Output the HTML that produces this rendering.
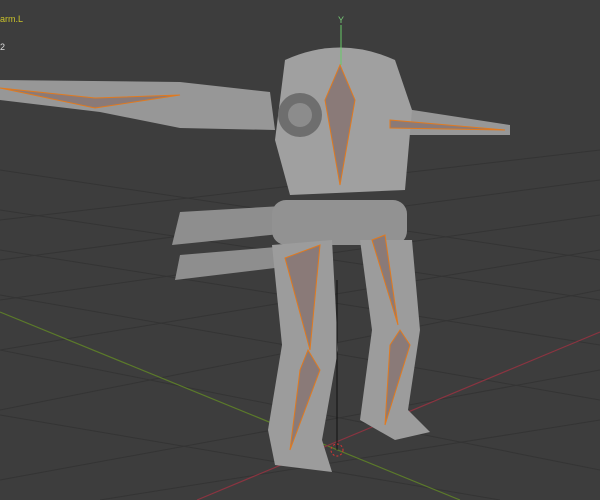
<!DOCTYPE html>
<html><head><style>
html,body{margin:0;padding:0;background:#3d3d3d;width:600px;height:500px;overflow:hidden}
.t{position:absolute;font:9px "Liberation Sans",sans-serif}
</style></head><body>
<svg width="600" height="500" style="position:absolute;left:0;top:0">
<g stroke="#343434" stroke-width="1">
<line x1="0" y1="170" x2="600" y2="260"/><line x1="0" y1="210" x2="600" y2="300"/>
<line x1="0" y1="250" x2="600" y2="345"/><line x1="0" y1="295" x2="600" y2="400"/>
<line x1="0" y1="350" x2="600" y2="470"/><line x1="0" y1="415" x2="500" y2="500"/>
<line x1="0" y1="260" x2="600" y2="180"/><line x1="0" y1="300" x2="600" y2="215"/>
<line x1="0" y1="350" x2="600" y2="250"/><line x1="0" y1="410" x2="600" y2="290"/>
<line x1="0" y1="480" x2="600" y2="370"/><line x1="100" y1="500" x2="600" y2="420"/>
<line x1="0" y1="220" x2="600" y2="150"/>
</g>
<line x1="0" y1="312" x2="460" y2="500" stroke="#5b7a2a" stroke-width="1.2"/>
<line x1="197" y1="500" x2="600" y2="332" stroke="#8a3440" stroke-width="1.2"/>
<!-- arms -->
<path d="M0 80 L180 82 L270 92 L275 130 L180 128 L100 112 L0 100Z" fill="#979797"/>
<path d="M380 105 L510 125 L510 135 L380 135Z" fill="#979797"/>
<!-- torso -->
<path d="M285 60 Q340 35 395 60 L412 110 L405 190 L290 195 L275 140Z" fill="#a0a0a0"/>
<circle cx="300" cy="115" r="22" fill="#6e6e6e"/><circle cx="300" cy="115" r="12" fill="#8c8c8c"/>
<!-- blades -->
<path d="M180 212 L300 205 L300 232 L172 245Z" fill="#8e8e8e"/>
<path d="M180 255 L300 245 L300 265 L175 280Z" fill="#8e8e8e"/>
<!-- pelvis -->
<rect x="272" y="200" width="135" height="45" rx="14" fill="#929292"/>
<!-- legs -->
<path d="M272 245 L332 240 L338 350 L322 440 L332 472 L275 465 L268 430 L282 345Z" fill="#9c9c9c"/>
<path d="M360 240 L412 240 L420 330 L408 410 L430 432 L395 440 L360 420 L372 330Z" fill="#9c9c9c"/>
<!-- bones -->
<g fill="#8a7a78" stroke="#e07a20" stroke-width="1">
<path d="M340 65 L355 100 L340 185 L325 100Z"/>
<path d="M0 88 L95 98 L180 95 L95 108Z"/>
<path d="M390 120 L505 130 L390 128Z"/>
<path d="M285 258 L320 245 L310 350Z"/>
<path d="M372 240 L385 235 L398 325 Z"/>
<path d="M308 350 L320 370 L290 450 L300 370Z"/>
<path d="M400 330 L410 345 L385 425 L390 345Z"/>
</g>
<line x1="337" y1="280" x2="337" y2="450" stroke="#111" stroke-width="1"/>
<circle cx="337" cy="450" r="6" fill="none" stroke="#d33" stroke-dasharray="2 2"/>
<line x1="341" y1="25" x2="341" y2="65" stroke="#6c6" stroke-width="1"/>
</svg>
<div class="t" style="left:0;top:14px;color:#c9c22a">arm.L</div>
<div class="t" style="left:0;top:42px;color:#ddd">2</div>
<div class="t" style="left:338px;top:15px;color:#7c7">Y</div>
</body></html>
